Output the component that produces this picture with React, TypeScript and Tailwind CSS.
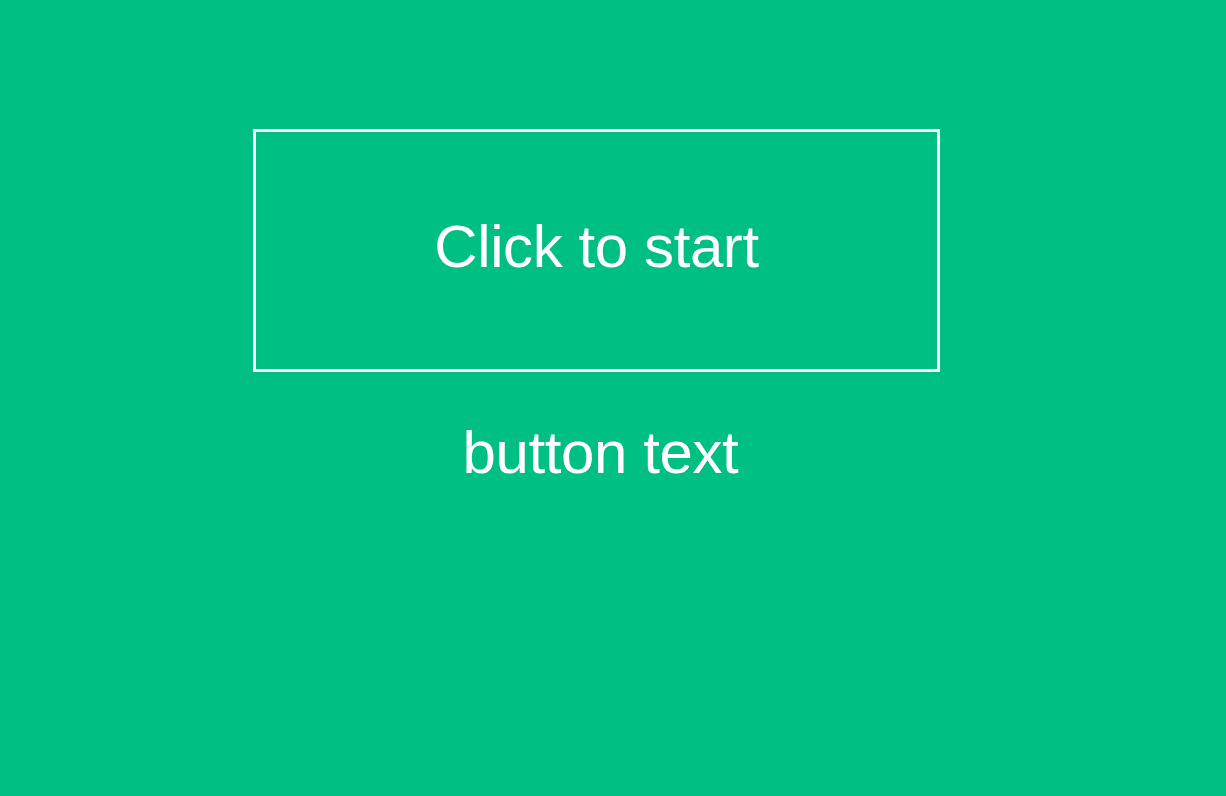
export default function App() {
  return (
    <div
      className="min-h-[796px] w-full bg-[#00bf82] pl-[253px] pt-[129px] text-white"
      style={{ fontFamily: '"Liberation Sans", Arial, Helvetica, sans-serif' }}
    >
      <div className="flex w-[687px] flex-col">
        {/* Start button */}
        <button className="flex h-[243px] w-full items-center justify-center border-[3px] border-white pb-2 text-[60px] leading-[67px] tracking-[-0.4px] text-white">
          Click to start
        </button>

        {/* Caption */}
        <p className="mt-[47px] pl-2 text-center text-[60px] leading-[67px] tracking-[-0.4px]">
          button text
        </p>
      </div>
    </div>
  );
}
